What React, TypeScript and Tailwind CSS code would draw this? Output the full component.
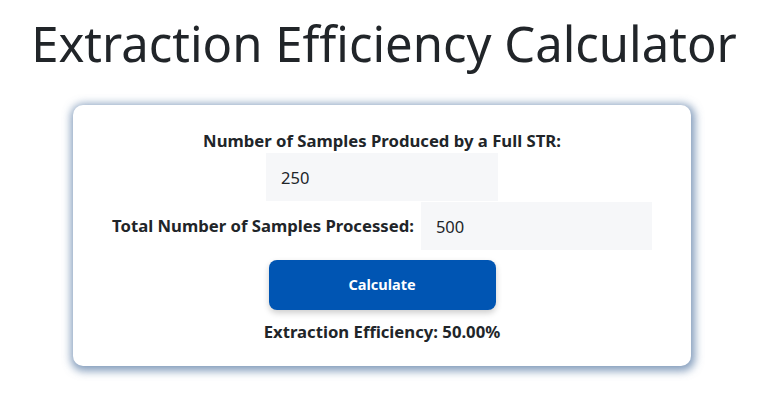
export default function App() {
  return (
    <main
      className="min-h-screen bg-white flex flex-col items-center text-[#212529]"
      style={{ fontFamily: '"Noto Sans", "Open Sans", sans-serif' }}
    >
      <h1 className="mt-[11px] text-[49px] leading-[64px] font-normal">
        Extraction Efficiency Calculator
      </h1>

      <div className="mt-[30px] mr-[4px] w-[618px] rounded-[10px] bg-white px-5 pt-[25px] pb-[22px] flex flex-col items-center shadow-[1px_2px_9px_3px_rgba(80,115,160,0.7)]">
        <label className="text-[16.7px] font-bold leading-[22px]">
          Number of Samples Produced by a Full STR:
        </label>
        <input
          defaultValue="250"
          className="mt-px h-12 w-[232px] bg-[#f6f7f9] px-[15px] text-[16.5px] outline-none"
        />

        <div className="mt-px flex items-center gap-[7px]">
          <label className="text-[16.7px] font-bold">Total Number of Samples Processed:</label>
          <input
            defaultValue="500"
            className="h-12 w-[231px] bg-[#f6f7f9] px-[15px] text-[16.5px] outline-none"
          />
        </div>

        <button className="mt-[10px] h-[50px] w-[227px] rounded-lg bg-[#0055b3] text-[14.5px] font-bold text-white shadow-[0_3px_6px_rgba(0,0,0,0.2)]">
          Calculate
        </button>

        <p className="mt-[10px] text-[16.7px] leading-6 font-bold">Extraction Efficiency: 50.00%</p>
      </div>
    </main>
  );
}
